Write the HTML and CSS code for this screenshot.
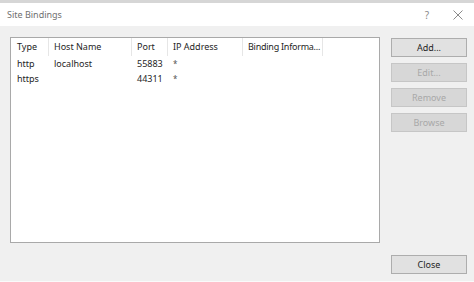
FILE: index.html
```html
<!DOCTYPE html>
<html>
<head>
<meta charset="utf-8">
<link rel="stylesheet" href="styles.css">
</head>
<body>
<div class="window">
  <div class="titlebar">
    <span class="title">Site Bindings</span>
    <span class="tb-btn help">?</span>
    <span class="tb-btn close">
      <svg width="10" height="10" viewBox="0 0 10 10"><path d="M0.5 0.5 L9.5 9.5 M9.5 0.5 L0.5 9.5" stroke="#8a8a8a" stroke-width="1" fill="none"/></svg>
    </span>
  </div>
  <div class="content">
    <div class="main">
      <div class="listbox">
        <div class="grid">
          <div class="hd">Type</div>
          <div class="hd">Host Name</div>
          <div class="hd">Port</div>
          <div class="hd">IP Address</div>
          <div class="hd tight">Binding Informa...</div>

          <div class="cell">http</div>
          <div class="cell">localhost</div>
          <div class="cell">55883</div>
          <div class="cell star">*</div>
          <div class="cell"></div>

          <div class="cell">https</div>
          <div class="cell"></div>
          <div class="cell">44311</div>
          <div class="cell star">*</div>
          <div class="cell"></div>
        </div>
      </div>
      <div class="side">
        <button class="btn">Add...</button>
        <button class="btn" disabled>Edit...</button>
        <button class="btn" disabled>Remove</button>
        <button class="btn" disabled>Browse</button>
      </div>
    </div>
    <div class="footer">
      <button class="btn">Close</button>
    </div>
  </div>
</div>
</body>
</html>
```
FILE: styles.css
```css
html, body {
  margin: 0;
  padding: 0;
  background: #f0f0f0;
}
.window {
  width: 474px;
  height: 282px;
  box-sizing: border-box;
  display: flex;
  flex-direction: column;
  background: #f0f0f0;
  font-family: "Noto Sans", sans-serif;
  font-size: 9px;
  color: #1e1e1e;
}
.titlebar {
  height: 23px;
  border-top: 3px solid #d6d6d6;
  background: #fff;
  display: flex;
  align-items: center;
  padding-left: 7px;
  flex: none;
}
.title {
  color: #707070;
  flex: 1;
}
.tb-btn {
  color: #8a8a8a;
  display: flex;
  align-items: center;
  justify-content: center;
}
.help {
  width: 10px;
  margin-right: 21px;
  font-size: 10px;
}
.close {
  width: 10px;
  margin-right: 11px;
}
.content {
  flex: 1;
  display: flex;
  flex-direction: column;
  padding: 11px 7px 0 10px;
  border-bottom: 1px solid #fafafa;
}
.main {
  display: flex;
  gap: 11px;
}
.listbox {
  width: 370px;
  height: 206px;
  box-sizing: border-box;
  background: #fff;
  border: 1px solid #a9a9a9;
}
.grid {
  display: grid;
  grid-template-columns: 38px 83px 36px 75px 80px;
  grid-auto-rows: 15px;
  grid-template-rows: 18px;
}
.hd {
  line-height: 18px;
  padding-left: 5px;
  border-right: 1px solid #e6e6e6;
  white-space: nowrap;
}
.hd:first-child {
  padding-left: 6px;
}
.tight {
  letter-spacing: -0.25px;
}
.cell {
  line-height: 15px;
  padding-left: 5px;
  white-space: nowrap;
}
.star {
  color: #555;
  font-size: 8px;
}
.grid .cell:nth-child(5n+1) {
  padding-left: 6px;
}
.side {
  display: flex;
  flex-direction: column;
  gap: 6px;
  padding-top: 1px;
}
.btn {
  width: 76px;
  height: 19px;
  box-sizing: border-box;
  background: #e1e1e1;
  border: 1px solid #adadad;
  font-family: "Noto Sans", sans-serif;
  font-size: 9px;
  color: #1e1e1e;
  padding: 0;
  margin: 0;
}
.btn:disabled {
  background: #d7d7d7;
  border-color: #c6c6c6;
  color: #a8a8a8;
}
.footer {
  display: flex;
  justify-content: flex-end;
  margin-top: 12px;
}
```
